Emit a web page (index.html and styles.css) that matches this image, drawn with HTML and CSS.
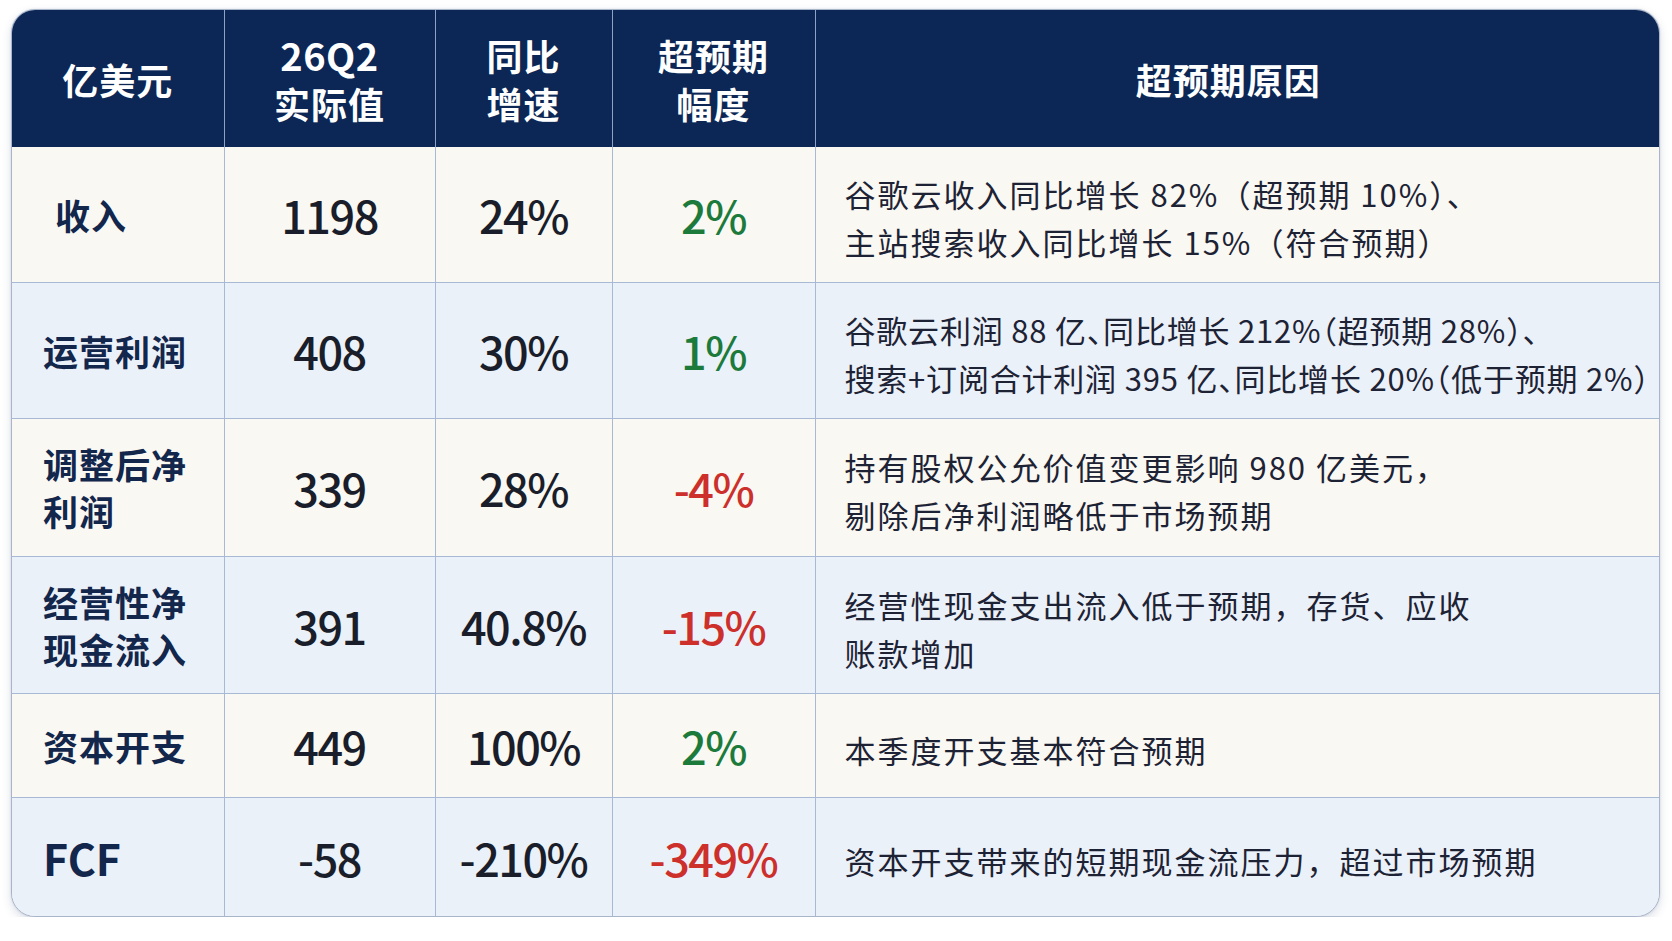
FILE: index.html
```html
<!DOCTYPE html>
<html lang="zh-CN">
<head>
<meta charset="utf-8">
<title>26Q2 超预期分析</title>
<link rel="stylesheet" href="styles.css">
</head>
<body>
<div class="card">
  <table class="grid">
    <colgroup>
      <col class="c-label">
      <col class="c-actual">
      <col class="c-yoy">
      <col class="c-beat">
      <col class="c-reason">
    </colgroup>
    <thead>
      <tr class="head">
        <th>亿美元</th>
        <th><span class="latin-h">26Q2</span><br>实际值</th>
        <th>同比<br>增速</th>
        <th>超预期<br>幅度</th>
        <th class="wide">超预期原因</th>
      </tr>
    </thead>
    <tbody>
      <tr class="row cream h135">
        <td class="label indent">收入</td>
        <td class="num">1198</td>
        <td class="num">24%</td>
        <td class="num up">2%</td>
        <td class="reason">谷歌云收入同比增长 82%（超预期 10%）、<br>主站搜索收入同比增长 15%（符合预期）</td>
      </tr>
      <tr class="row blue h136">
        <td class="label">运营利润</td>
        <td class="num">408</td>
        <td class="num">30%</td>
        <td class="num up">1%</td>
        <td class="reason tight">谷歌云利润 88 亿、同比增长 212%（超预期 28%）、<br>搜索+订阅合计利润 395 亿、同比增长 20%（低于预期 2%）</td>
      </tr>
      <tr class="row cream h138">
        <td class="label">调整后净<br>利润</td>
        <td class="num">339</td>
        <td class="num">28%</td>
        <td class="num down">-4%</td>
        <td class="reason">持有股权公允价值变更影响 980 亿美元，<br>剔除后净利润略低于市场预期</td>
      </tr>
      <tr class="row blue h137">
        <td class="label">经营性净<br>现金流入</td>
        <td class="num">391</td>
        <td class="num">40.8%</td>
        <td class="num down">-15%</td>
        <td class="reason">经营性现金支出流入低于预期，存货、应收<br>账款增加</td>
      </tr>
      <tr class="row cream h104">
        <td class="label">资本开支</td>
        <td class="num">449</td>
        <td class="num">100%</td>
        <td class="num up">2%</td>
        <td class="reason">本季度开支基本符合预期</td>
      </tr>
      <tr class="row blue h120">
        <td class="label latin">FCF</td>
        <td class="num">-58</td>
        <td class="num">-210%</td>
        <td class="num down">-349%</td>
        <td class="reason">资本开支带来的短期现金流压力，超过市场预期</td>
      </tr>
    </tbody>
  </table>
</div>
</body>
</html>
```

FILE: styles.css
```css
html, body {
  margin: 0;
  padding: 0;
  background: #ffffff;
}

body {
  padding: 9px 0 0 11px;
  font-family: "Noto Sans CJK SC", "Noto Sans", sans-serif;
}

.card {
  width: 1649px;
  height: 908px;
  box-sizing: border-box;
  border: 1.5px solid #a9b6ca;
  border-radius: 24px;
  overflow: hidden;
  background: #eef2f8;
  box-shadow: 0 4px 10px rgba(60, 80, 120, 0.18), 0 0 2px rgba(60, 80, 120, 0.2);
}

.grid {
  width: 100%;
  height: 100%;
  border-collapse: collapse;
  table-layout: fixed;
}

.c-label { width: 212px; }
.c-actual { width: 211px; }
.c-yoy { width: 177px; }
.c-beat { width: 203px; }
.c-reason { width: auto; }

.head {
  height: 137px;
  background: #0c2755;
}

.head th {
  color: #ffffff;
  font-weight: 700;
  font-size: 36px;
  line-height: 48px;
  letter-spacing: 1px;
  text-align: center;
  vertical-align: middle;
  padding: 0;
  border-left: 1px solid #8da2c4;
}

.head th:first-child {
  border-left: none;
}

.head th.wide {
  padding-right: 18px;
}

.latin-h {
  font-size: 38px;
  letter-spacing: 0.5px;
}

.row td {
  border-top: 1.5px solid #a7b9d4;
  border-left: 1.5px solid #a7b9d4;
  padding: 0;
  vertical-align: middle;
}

.row td:first-child {
  border-left: none;
}

thead + tbody .row:first-child td {
  border-top: none;
}

.cream { background: #f9f8f3; }
.blue { background: #ebf1f9; }

.h135 { height: 135px; }
.h136 { height: 136px; }
.h138 { height: 138px; }
.h137 { height: 137px; }
.h104 { height: 104px; }
.h120 { height: 118px; }

.label {
  padding-left: 31px !important;
  color: #13264b;
  font-weight: 700;
  font-size: 35px;
  line-height: 47px;
  letter-spacing: 1px;
}

.label.indent {
  padding-left: 43px !important;
}

.label.latin {
  font-size: 43px;
  letter-spacing: 0;
}

.num {
  text-align: center;
  font-weight: 500;
  font-size: 45px;
  letter-spacing: -1.5px;
  color: #1a1e2a;
}

.num.up { color: #1c7a3b; }
.num.down { color: #cd2f2b; }

.reason {
  padding: 8px 0 0 29px !important;
  font-weight: 400;
  font-size: 31px;
  line-height: 48px;
  letter-spacing: 2px;
  color: #1d2334;
  white-space: nowrap;
}

.reason.tight {
  letter-spacing: 0.8px;
  font-feature-settings: "halt" 1;
}
```
